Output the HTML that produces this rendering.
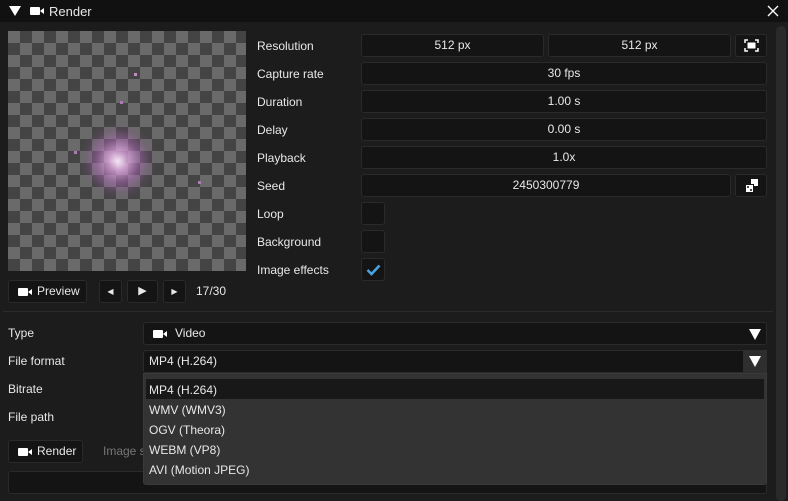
<!DOCTYPE html>
<html><head><meta charset="utf-8"><style>
*{box-sizing:border-box;margin:0;padding:0}
body{width:788px;height:501px;background:#1c1c1c;font-family:"Liberation Sans","DejaVu Sans",sans-serif;font-size:12px;color:#e8e8e8;position:relative;overflow:hidden}
.a{position:absolute}
.title{left:0;top:0;width:788px;height:22px;background:#111}
.inp{position:absolute;background:#141414;border:1px solid #2a2a2a;border-radius:3px;height:23px;text-align:center;line-height:21px;color:#e8e8e8}
.lbl{position:absolute;left:257px;line-height:16px}
.btn{position:absolute;background:#141414;border:1px solid #2a2a2a;border-radius:3px;height:23px;line-height:21px}
.cam{position:absolute;width:10px;height:8px;background:#fff;border-radius:1px}
.cam:after{content:"";position:absolute;left:10px;top:1px;border-right:4px solid #fff;border-top:3px solid transparent;border-bottom:3px solid transparent}
.checker{left:8px;top:31px;width:238px;height:240px;background-color:#6a6a6a;background-image:linear-gradient(45deg,#444 25%,transparent 25%,transparent 75%,#444 75%),linear-gradient(45deg,#444 25%,transparent 25%,transparent 75%,#444 75%);background-size:24px 24px;background-position:0 0,12px 12px;overflow:hidden}
.tri{width:0;height:0;border-left:6px solid transparent;border-right:6px solid transparent;border-top:11px solid #fff;position:absolute}
.item{position:absolute;left:149px;line-height:16px}
</style></head><body>
<div class="a title"></div>
<div class="a" style="left:9px;top:6px;width:0;height:0;border-left:6px solid transparent;border-right:6px solid transparent;border-top:10px solid #fff"></div>
<div class="cam" style="left:30px;top:7px"></div>
<div class="a" style="left:49px;top:4px;font-size:13px">Render</div>
<svg class="a" style="left:767px;top:5px" width="12" height="12"><path d="M1 1L11 11M11 1L1 11" stroke="#fff" stroke-width="1.3"/></svg>
<div class="a" style="left:776px;top:26px;width:10px;height:475px;background:#2a2a2a;border-radius:5px"></div>

<div class="a checker">
 <div class="a" style="left:60px;top:80px;width:100px;height:100px;background:radial-gradient(circle at 50% 50%,rgba(255,240,255,0.95) 0,rgba(230,170,230,0.75) 14%,rgba(190,110,200,0.45) 30%,rgba(150,80,160,0.15) 45%,transparent 55%)"></div>
 <div class="a" style="left:126px;top:42px;width:3px;height:3px;background:#c58ac8"></div>
 <div class="a" style="left:112px;top:70px;width:3px;height:3px;background:#b07ab8"></div>
 <div class="a" style="left:66px;top:120px;width:3px;height:3px;background:#b07ab8"></div>
 <div class="a" style="left:190px;top:150px;width:3px;height:3px;background:#b07ab8"></div>
</div>

<div class="lbl" style="top:38px">Resolution</div>
<div class="lbl" style="top:66px">Capture rate</div>
<div class="lbl" style="top:94px">Duration</div>
<div class="lbl" style="top:122px">Delay</div>
<div class="lbl" style="top:150px">Playback</div>
<div class="lbl" style="top:178px">Seed</div>
<div class="lbl" style="top:206px">Loop</div>
<div class="lbl" style="top:234px">Background</div>
<div class="lbl" style="top:262px">Image effects</div>

<div class="inp" style="left:361px;top:34px;width:183px">512 px</div>
<div class="inp" style="left:548px;top:34px;width:183px">512 px</div>
<div class="btn" style="left:735px;top:34px;width:32px"><svg class="a" style="left:8px;top:4px" width="15" height="13"><path d="M1 4V1H4M11 1H14V4M14 9V12H11M4 12H1V9" stroke="#fff" stroke-width="1.5" fill="none"/><rect x="3.5" y="3.5" width="8" height="6" fill="#fff"/></svg></div>
<div class="inp" style="left:361px;top:62px;width:406px">30 fps</div>
<div class="inp" style="left:361px;top:90px;width:406px">1.00 s</div>
<div class="inp" style="left:361px;top:118px;width:406px">0.00 s</div>
<div class="inp" style="left:361px;top:146px;width:406px">1.0x</div>
<div class="inp" style="left:361px;top:174px;width:370px">2450300779</div>
<div class="btn" style="left:735px;top:174px;width:32px"><svg class="a" style="left:9px;top:4px" width="14" height="14"><rect x="6" y="0" width="7" height="7" fill="#fff"/><rect x="0.5" y="5.5" width="8" height="8" fill="#fff" stroke="#141414"/><circle cx="3" cy="8" r="1" fill="#141414"/><circle cx="6" cy="11" r="1" fill="#141414"/></svg></div>
<div class="inp" style="left:361px;top:202px;width:24px"></div>
<div class="inp" style="left:361px;top:230px;width:24px"></div>
<div class="inp" style="left:361px;top:258px;width:24px"><svg class="a" style="left:4px;top:5px" width="15" height="12"><path d="M1.5 6L5.5 10L13.5 1.5" stroke="#4aa3e0" stroke-width="2.6" fill="none"/></svg></div>

<div class="btn" style="left:8px;top:280px;width:79px"><div class="cam" style="left:9px;top:7px"></div><span class="a" style="left:28px;top:0">Preview</span></div>
<div class="btn" style="left:99px;top:280px;width:23px;font-size:8px;text-align:center">◀</div>
<div class="btn" style="left:127px;top:280px;width:31px;font-size:11px;text-align:center">▶</div>
<div class="btn" style="left:163px;top:280px;width:23px;font-size:8px;text-align:center">▶</div>
<div class="a" style="left:196px;top:284px">17/30</div>

<div class="a" style="left:3px;top:311px;width:770px;height:1px;background:#2c2c2c"></div>

<div class="a" style="left:8px;top:326px">Type</div>
<div class="a" style="left:8px;top:354px">File format</div>
<div class="a" style="left:8px;top:382px">Bitrate</div>
<div class="a" style="left:8px;top:410px">File path</div>

<div class="btn" style="left:143px;top:322px;width:624px"><div class="cam" style="left:9px;top:7px"></div><span class="a" style="left:31px;top:0">Video</span><div class="tri" style="left:605px;top:6px"></div></div>
<div class="btn" style="left:143px;top:350px;width:624px"><span class="a" style="left:5px;top:0">MP4 (H.264)</span><div class="a" style="left:599px;top:-1px;width:24px;height:23px;background:#2e2e2e"></div><div class="tri" style="left:605px;top:5px"></div></div>

<div class="btn" style="left:8px;top:440px;width:75px"><div class="cam" style="left:9px;top:7px"></div><span class="a" style="left:28px;top:0">Render</span></div>
<div class="a" style="left:103px;top:444px;color:#777">Image s</div>
<div class="inp" style="left:8px;top:471px;width:759px"></div>

<div class="a" style="left:143px;top:373px;width:624px;height:112px;background:#333;border:1px solid #3a3a3a;border-radius:0 0 3px 3px"></div>
<div class="a" style="left:146px;top:379px;width:618px;height:20px;background:#181818"></div>
<div class="item" style="top:382px">MP4 (H.264)</div>
<div class="item" style="top:402px">WMV (WMV3)</div>
<div class="item" style="top:422px">OGV (Theora)</div>
<div class="item" style="top:442px">WEBM (VP8)</div>
<div class="item" style="top:462px">AVI (Motion JPEG)</div>
</body></html>
